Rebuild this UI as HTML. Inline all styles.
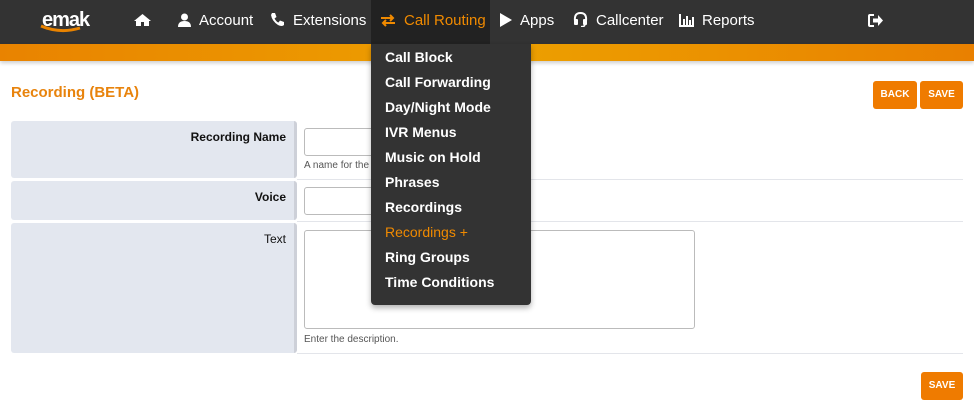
<!DOCTYPE html>
<html><head><style>
*{box-sizing:border-box;margin:0;padding:0}
body{width:974px;height:411px;overflow:hidden;background:#fff;font-family:"Liberation Sans",Arial,sans-serif;position:relative}
.nav{position:absolute;left:0;top:0;width:974px;height:44px;background:#333}
.band{position:absolute;left:0;top:44px;width:974px;height:17px;background:linear-gradient(90deg,#e98300,#eda100 50%,#e98000);box-shadow:0 2px 4px rgba(0,0,0,.2)}
.ni{position:absolute;top:0;height:44px;line-height:41px;color:#fff;font-size:15px;white-space:nowrap}
.ni svg{vertical-align:-2px;margin-right:8px}
.act{position:absolute;left:371px;top:0;width:119px;height:44px;background:#222}
.dd{position:absolute;left:371px;top:44px;width:160px;height:261px;background:#333;border-radius:0 0 4px 4px;box-shadow:0 3px 6px rgba(0,0,0,.3)}
.dd div{position:absolute;left:14px;font-size:14px;font-weight:bold;color:#fff}
h1{position:absolute;left:11px;top:84px;font-size:15px;font-weight:bold;color:#e8830c}
.btn{position:absolute;height:28px;background:#ef7b00;color:#fff;font-size:10px;font-weight:bold;border-radius:3px;text-align:center;line-height:28px}
.lab{position:absolute;left:11px;width:286px;background:#e3e7ef;border-right:3px solid #cdd0d8;border-radius:3px;font-size:12px;text-align:right;padding-right:8px;color:#111}
.line{position:absolute;left:297px;width:666px;height:1px;background:#e3e5ea}
.inp{position:absolute;left:304px;border:1px solid #bbb;border-radius:3px;background:#fff}
.help{position:absolute;left:304px;font-size:10px;color:#555}
</style></head><body>
<div class="nav"></div>
<div class="act"></div>
<div class="ni" style="left:42px;top:2px;font-size:20px;font-weight:bold;letter-spacing:-1px;line-height:36px">emak</div>
<svg style="position:absolute;left:40px;top:24px" width="42" height="10"><path d="M1 2 Q20 10 40 4" stroke="#e98300" stroke-width="3" fill="none"/></svg>
<svg style="position:absolute;left:134px;top:13px" width="17" height="14"><path d="M8.5 1 L0 8 L2 8 L2 13 L7 13 L7 9 L10 9 L10 13 L15 13 L15 8 L17 8Z" fill="#fff"/></svg>
<div class="ni" style="left:178px"><svg width="13" height="14"><circle cx="6.5" cy="4" r="3.5" fill="#fff"/><path d="M0 14 Q0 8 6.5 8 Q13 8 13 14Z" fill="#fff"/></svg>Account</div>
<div class="ni" style="left:270px"><svg width="15" height="15"><path d="M2 1 L5 1 L6.5 5 L4.5 6.5 Q6.5 10 8.5 10.5 L10 8.5 L14 10 L14 13 Q12 15 8 13 Q2 9 1 3Z" fill="#fff"/></svg>Extensions</div>
<div class="ni" style="left:380px;color:#f08a00"><svg width="16" height="13"><path d="M1 4 H13 M10 1 L13 4 L10 7 M15 9 H3 M6 6 L3 9 L6 12" stroke="#f08a00" stroke-width="2" fill="none"/></svg>Call Routing</div>
<div class="ni" style="left:499px"><svg width="13" height="14"><path d="M1 0 L13 7 L1 14Z" fill="#fff"/></svg>Apps</div>
<div class="ni" style="left:573px"><svg width="15" height="15"><path d="M2 9 Q1 1 7.5 1 Q14 1 13 9" stroke="#fff" stroke-width="2" fill="none"/><rect x="1" y="7" width="4" height="6" rx="1" fill="#fff"/><rect x="10" y="7" width="4" height="6" rx="1" fill="#fff"/><path d="M12 13 Q11 15 8 14.5" stroke="#fff" stroke-width="1.5" fill="none"/></svg>Callcenter</div>
<div class="ni" style="left:679px"><svg width="15" height="13"><path d="M1 0 V12 H15" stroke="#fff" stroke-width="2" fill="none"/><rect x="4" y="5" width="2" height="6" fill="#fff"/><rect x="7" y="2" width="2" height="9" fill="#fff"/><rect x="10" y="6" width="2" height="5" fill="#fff"/><rect x="13" y="3" width="2" height="8" fill="#fff"/></svg>Reports</div>
<svg style="position:absolute;left:868px;top:14px" width="16" height="13"><path d="M6 1 H2 Q1 1 1 2 V11 Q1 12 2 12 H6" stroke="#fff" stroke-width="2" fill="none"/><path d="M5 4.5 H10 V1 L15 6.5 L10 12 V8.5 H5Z" fill="#fff"/></svg>
<div class="band"></div>
<h1>Recording (BETA)</h1>
<div class="btn" style="left:873px;top:81px;width:44px">BACK</div>
<div class="btn" style="left:920px;top:81px;width:43px">SAVE</div>
<div class="lab" style="top:121px;height:57px;font-weight:bold;padding-top:9px">Recording Name</div>
<div class="lab" style="top:181px;height:39px;font-weight:bold;padding-top:9px">Voice</div>
<div class="lab" style="top:223px;height:130px;padding-top:9px">Text</div>
<div class="inp" style="top:128px;width:210px;height:28px"></div>
<div class="help" style="top:160px">A name for the recording.</div>
<div class="line" style="top:179px"></div>
<div class="inp" style="top:187px;width:210px;height:28px"></div>
<div class="line" style="top:221px"></div>
<div class="inp" style="top:230px;width:391px;height:99px;border-color:#bbb"></div>
<div class="help" style="top:334px">Enter the description.</div>
<div class="line" style="top:353px"></div>
<div class="btn" style="left:921px;top:372px;width:42px">SAVE</div>
<div class="dd">
<div style="top:5px">Call Block</div>
<div style="top:30px">Call Forwarding</div>
<div style="top:55px">Day/Night Mode</div>
<div style="top:80px">IVR Menus</div>
<div style="top:105px">Music on Hold</div>
<div style="top:130px">Phrases</div>
<div style="top:155px">Recordings</div>
<div style="top:180px;color:#f08a00;font-weight:normal">Recordings +</div>
<div style="top:205px">Ring Groups</div>
<div style="top:230px">Time Conditions</div>
</div>
</body></html>
